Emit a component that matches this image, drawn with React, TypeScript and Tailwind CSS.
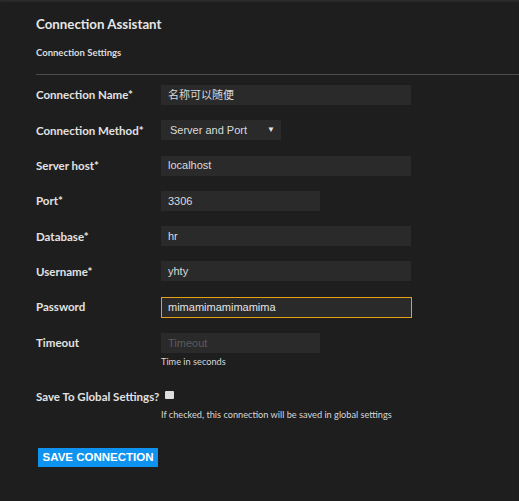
import React from "react";

const label = "text-[11.5px] font-bold text-[#e2e2e2] w-[125px] shrink-0";
const field =
  "h-5 bg-[#2a2a2a] text-[11px] pl-[7px] flex items-center font-['Liberation_Sans','Noto_Sans_CJK_SC',sans-serif]";

const Row = ({ name, children }: { name: string; children: React.ReactNode }) => (
  <div className="flex items-start">
    <div className={label + " h-5 flex items-center"}>{name}</div>
    <div className="flex flex-col">{children}</div>
  </div>
);

const App = () => {
  return (
    <div className="w-[519px] h-[501px] bg-[#1e1e1e] pl-9 pt-[14px] font-['Lato',sans-serif] overflow-hidden shadow-[inset_0_3px_3px_-2px_#333]">
      <h1 className="text-[13.3px] leading-5 font-bold text-[#e6e6e6]">Connection Assistant</h1>
      <h2 className="mt-3 text-[9.5px] leading-[14px] font-bold text-[#dcdcdc]">Connection Settings</h2>
      <div className="mt-[14px] border-t border-[#4d4d4d]" />

      <div className="mt-[10px] flex flex-col gap-[15.3px]">
        <Row name="Connection Name*">
          <div className={field + " w-[250px] text-[#dadada]"}>名称可以随便</div>
        </Row>
        <Row name="Connection Method*">
          <div className={field + " w-[120px] pl-[9px] justify-between pr-[6px] text-[#dadada]"}>
            <span>Server and Port</span>
            <span className="text-[8px] text-[#e6e6e6]">▼</span>
          </div>
        </Row>
        <Row name="Server host*">
          <div className={field + " w-[250px] text-[#dadada]"}>localhost</div>
        </Row>
        <Row name="Port*">
          <div className={field + " w-[159px] text-[#dadada]"}>3306</div>
        </Row>
        <Row name="Database*">
          <div className={field + " w-[250px] text-[#dadada]"}>hr</div>
        </Row>
        <Row name="Username*">
          <div className={field + " w-[250px] text-[#dadada]"}>yhty</div>
        </Row>
        <Row name="Password">
          <div className="w-[251px] h-[21px] bg-[#e6a117] p-px">
            <div className="h-full bg-[#2a2a2a] text-[11px] pl-[6px] flex items-center font-['Liberation_Sans',sans-serif] text-[#e4e4e4]">
              mimamimamimamima
            </div>
          </div>
        </Row>
        <Row name="Timeout">
          <div className={field + " w-[159px] text-[#5c5c5c]"}>Timeout</div>
          <div className="mt-[2px] text-[9.2px] leading-[14px] text-[#d6d6d6]">Time in seconds</div>
        </Row>
      </div>

      <div className="mt-[19px] flex items-center">
        <span className="text-[11.5px] font-bold text-[#e2e2e2]">Save To Global Settings?</span>
        <span className="ml-[6px] w-[9px] h-[8px] bg-[#dedede] rounded-[1px] -mt-[3px]" />
      </div>
      <div className="mt-[3px] ml-[125px] text-[9.2px] leading-[14px] text-[#d6d6d6]">
        If checked, this connection will be saved in global settings
      </div>

      <button className="mt-[26px] ml-[2px] w-[120px] h-[19px] bg-[#0f93f0] text-white text-[11.5px] font-bold font-['Liberation_Sans',sans-serif] flex items-center justify-center">
        SAVE CONNECTION
      </button>
    </div>
  );
};

export default App;
